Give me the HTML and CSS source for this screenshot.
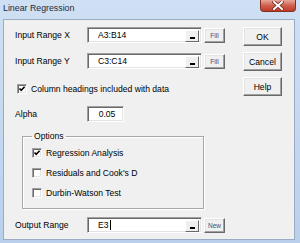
FILE: index.html
```html
<!DOCTYPE html>
<html lang="en">
<head>
    <title>Linear Regression</title>
    <link rel="stylesheet" href="styles.css">
</head>
<body>

    <div class="window">
        <div class="titlebar">
            <span class="title">Linear Regression</span>
            <span class="close">
                <svg width="12" height="9" viewBox="0 0 12 9">
                    <path d="M2 1 L10 8 M10 1 L2 8" stroke="#6b2218" stroke-width="3.4" stroke-linecap="square"/>
                    <path d="M2 1 L10 8 M10 1 L2 8" stroke="#fff" stroke-width="2" stroke-linecap="square"/>
                </svg>
            </span>
        </div>

        <div class="client">
            <form class="form">
                <div class="row first">
                    <label class="lbl">Input Range X</label>
                    <div class="ref"><span class="val">A3:B14</span><span class="pick"><i></i></span></div>
                    <button type="button" class="mini">Fill</button>
                </div>

                <div class="row second">
                    <label class="lbl">Input Range Y</label>
                    <div class="ref"><span class="val">C3:C14</span><span class="pick"><i></i></span></div>
                    <button type="button" class="mini">Fill</button>
                </div>

                <div class="check headings">
                    <span class="box on"></span>
                    <span>Column headings included with data</span>
                </div>

                <div class="row alpha">
                    <label class="lbl">Alpha</label>
                    <div class="num">0.05</div>
                </div>

                <fieldset class="group">
                    <legend>Options</legend>
                    <div class="check"><span class="box on"></span><span>Regression Analysis</span></div>
                    <div class="check"><span class="box"></span><span>Residuals and Cook's D</span></div>
                    <div class="check"><span class="box"></span><span>Durbin-Watson Test</span></div>
                </fieldset>

                <div class="row output">
                    <label class="lbl">Output Range</label>
                    <div class="ref"><span class="val">E3<b class="caret"></b></span><span class="pick"><i></i></span></div>
                    <button type="button" class="mini">New</button>
                </div>
            </form>

            <div class="actions">
                <button type="button" class="btn">OK</button>
                <button type="button" class="btn">Cancel</button>
                <button type="button" class="btn">Help</button>
            </div>
        </div>
    </div>

</body>
</html>
```

FILE: styles.css
```css
body {
    margin: 0;
    font-family: "Liberation Sans", Arial, sans-serif;
    font-size: 8.6px;
    color: #000;
}

.window {
    width: 300px;
    height: 243px;
    display: flex;
    flex-direction: column;
    background: linear-gradient(to bottom, #cfe0f4, #b9d0ec);
}

.titlebar {
    height: 19px;
    display: flex;
    align-items: flex-start;
}

.title {
    padding: 2px 0 0 3px;
    font-size: 8.8px;
    line-height: 12px;
    color: #1e2b3c;
}

.close {
    margin-left: auto;
    margin-right: 4px;
    width: 34px;
    height: 11px;
    display: flex;
    align-items: center;
    justify-content: center;
    border: 1px solid #7e3226;
    border-top: none;
    border-radius: 0 0 4px 4px;
    background: linear-gradient(to bottom, #e6a79b, #d0604e 50%, #c13a27);
}

.client {
    flex: 1;
    margin: 0 5px 3px 3px;
    border: 1px solid #9aabc2;
    background-color: #f0f0f0;
    display: flex;
}

.form {
    width: 211px;
    padding: 7px 0 0 11px;
}

.row {
    display: flex;
    align-items: center;
    height: 16px;
}

.second {
    margin-top: 10px;
}

.lbl {
    width: 72px;
}

.ref, .num {
    box-sizing: border-box;
    height: 16px;
    background-color: #fff;
    border: 1px solid;
    border-color: #a0a0a0 #fff #fff #a0a0a0;
    box-shadow: inset 1px 1px 0 #696969, inset -1px -1px 0 #e3e3e3;
    display: flex;
    align-items: center;
}

.ref {
    width: 115px;
    padding: 1px;
}

.val {
    flex: 1;
    padding-left: 9px;
    display: flex;
    align-items: center;
}

.caret {
    display: inline-block;
    width: 1px;
    height: 10px;
    margin-left: 1px;
    background-color: #000;
}

.pick {
    box-sizing: border-box;
    width: 14px;
    height: 12px;
    margin: 1px 1px 0 0;
    border: 1px solid;
    border-color: #fff #696969 #696969 #fff;
    background-color: #f0f0f0;
    display: flex;
    justify-content: center;
    align-items: flex-end;
    padding-bottom: 2px;
}

.pick i {
    width: 5px;
    height: 2px;
    background-color: #000;
}

.mini, .btn {
    box-sizing: border-box;
    font-family: inherit;
    padding: 0;
    background-color: #f0f0f0;
    border: 1px solid;
    border-color: #fff #696969 #696969 #fff;
    box-shadow: inset -1px -1px 0 #a0a0a0, inset 1px 1px 0 #e3e3e3;
    border-radius: 0;
}

.mini {
    width: 21px;
    height: 15px;
    margin-left: 2px;
    font-size: 6.5px;
    color: #34507a;
}

.check {
    display: flex;
    align-items: center;
    gap: 4px;
    height: 12px;
}

.headings {
    margin: 14px 0 0 2px;
}

.box {
    box-sizing: border-box;
    width: 10px;
    height: 10px;
    background-color: #fff;
    border: 1px solid;
    border-color: #a0a0a0 #fff #fff #a0a0a0;
    box-shadow: inset 1px 1px 0 #696969, inset -1px -1px 0 #e3e3e3;
}

.box.on {
    background: #fff url("data:image/svg+xml;utf8,<svg xmlns='http://www.w3.org/2000/svg' width='8' height='8' viewBox='0 0 8 8'><path d='M1.5 3.5 L3.2 5.3 L6.6 1.8' fill='none' stroke='black' stroke-width='1.6'/></svg>") no-repeat center;
}

.alpha {
    margin-top: 11px;
}

.num {
    width: 37px;
    justify-content: center;
    padding-left: 3px;
}

.group {
    width: 182px;
    box-sizing: border-box;
    margin: 9px 0 0 7px;
    padding: 6px 0 9px 9px;
    border: 1px solid #a8a8a8;
    box-shadow: 1px 1px 0 #fff, inset 1px 1px 0 #fff;
    display: flex;
    flex-direction: column;
    gap: 8px;
}

.group legend {
    padding: 0 2px;
    line-height: 10px;
}

.output {
    margin-top: 8px;
}

.actions {
    margin: 7px 0 0 17px;
    display: flex;
    flex-direction: column;
    gap: 6px;
}

.btn {
    width: 39px;
    height: 19px;
    font-size: 8.6px;
    color: #000;
}
```
